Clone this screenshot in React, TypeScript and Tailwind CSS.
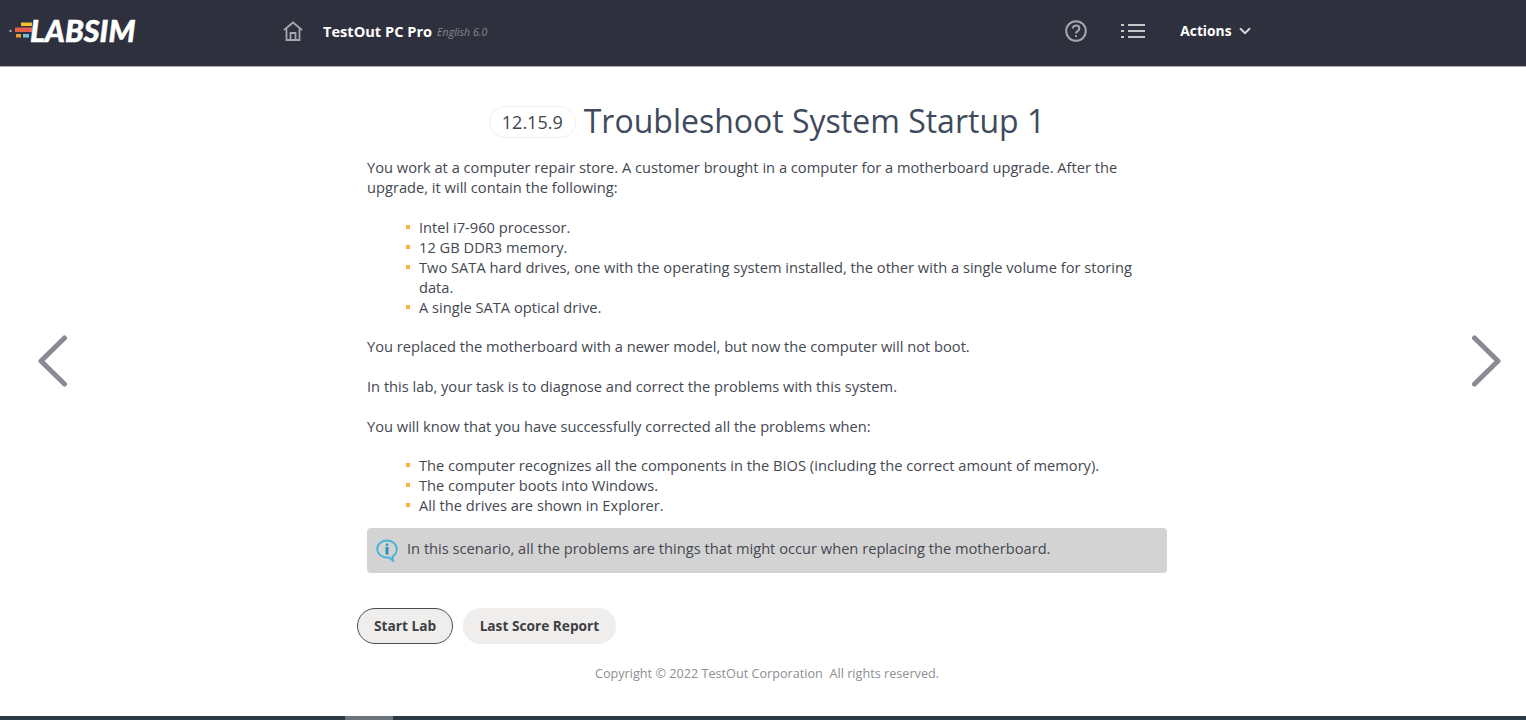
import { ChevronDown } from "lucide-react";

const specs = [
  "Intel i7-960 processor.",
  "12 GB DDR3 memory.",
  "Two SATA hard drives, one with the operating system installed, the other with a single volume for storing data.",
  "A single SATA optical drive.",
];

const goals = [
  "The computer recognizes all the components in the BIOS (including the correct amount of memory).",
  "The computer boots into Windows.",
  "All the drives are shown in Explorer.",
];

function Bullets({ items }: { items: string[] }) {
  return (
    <ul className="pl-[39px] pr-[30px]">
      {items.map((item) => (
        <li key={item} className="relative pl-[13px]">
          <span className="absolute left-0 top-[8px] h-[4px] w-[4px] bg-[#f2b544]" />
          {item}
        </li>
      ))}
    </ul>
  );
}

function Logo() {
  return (
    <div className="flex items-center">
      <svg width="24" height="20" viewBox="0 0 24 20" className="mt-[1px]">
        <circle cx="1.5" cy="10" r="1.2" fill="#9fb4bd" />
        <rect x="12" y="1.5" width="11" height="3.5" fill="#f2c230" />
        <rect x="6" y="6.5" width="17" height="4.5" fill="#e5604a" />
        <rect x="7" y="13" width="5" height="3.5" fill="#f09a2e" />
        <rect x="14" y="13" width="6" height="3.5" fill="#6fc3d6" />
      </svg>
      <span className="ml-[-3px] font-['Lato'] text-[30.5px] font-black italic leading-none text-white [-webkit-text-stroke:0.5px_white]">
        LABSIM
      </span>
    </div>
  );
}

function HomeIcon() {
  return (
    <svg width="20" height="20" viewBox="0 0 20 20" fill="none" stroke="#a4a7ae" strokeWidth="1.8">
      <path d="M1 9 10 1.5 19 9" />
      <path d="M3.5 7.5V19h13V7.5" />
      <path d="M7.5 19v-7h5v7" />
    </svg>
  );
}

function HelpIcon() {
  return (
    <svg width="22" height="22" viewBox="0 0 22 22" fill="none" stroke="#a4a7ae" strokeWidth="2">
      <circle cx="11" cy="11" r="9.8" />
      <path d="M7.8 8.6c0-4.2 6.6-4 6.6 0 0 2.6-3.4 2.4-3.4 5" />
      <path d="M11 15.2v1.8" />
    </svg>
  );
}

function ListIcon() {
  return (
    <svg width="24" height="16" viewBox="0 0 24 16" fill="none" stroke="#c4c6ca" strokeWidth="2">
      <path d="M0 2h3M7 2h17M0 8h3M7 8h17M0 14h3M7 14h17" />
    </svg>
  );
}

function Arrow({ flip }: { flip?: boolean }) {
  return (
    <svg width="30" height="52" viewBox="0 0 30 52" fill="none" stroke="#888b92" strokeWidth="5" strokeLinecap="round" strokeLinejoin="round" className={flip ? "rotate-180" : ""}>
      <path d="M26.5 3 3 26l23.5 23" />
    </svg>
  );
}

function InfoIcon() {
  return (
    <svg width="22" height="24" viewBox="0 0 22 24" fill="none">
      <path d="M11 1.5c5.5 0 9.7 3.7 9.7 8.6 0 3.4-1.6 6-4.2 7.4l.5 4.2-3.9-3.2C7 19 1.2 15.5 1.2 10.1 1.2 5.2 5.5 1.5 11 1.5Z" stroke="#41b3d8" strokeWidth="1.8" />
      <circle cx="11" cy="5.8" r="1.3" fill="#2d8fb3" />
      <rect x="9.5" y="8" width="3" height="7.5" fill="#2d8fb3" />
    </svg>
  );
}

export default function App() {
  return (
    <div className="flex h-[720px] flex-col overflow-hidden bg-white font-['Open_Sans',sans-serif] text-[14.67px] leading-[20px] text-[#444851]">
      <header className="flex h-[67px] shrink-0 items-center border-b border-[#a9abb0] bg-[#2e303d] pb-[5px] text-white">
        <div className="flex w-[283px] shrink-0 pl-[9px]">
          <Logo />
        </div>
        <HomeIcon />
        <span className="ml-[20px] text-[14.6px] font-bold">TestOut PC Pro</span>
        <span className="ml-[5px] mt-[2px] text-[10.6px] italic text-[#868892]">English 6.0</span>
        <div className="ml-[578px]">
          <HelpIcon />
        </div>
        <div className="ml-[34px]">
          <ListIcon />
        </div>
        <span className="ml-[35px] text-[13.8px] font-bold">Actions</span>
        <ChevronDown className="ml-[4px] h-[18px] w-[18px] text-[#d5d6d9]" strokeWidth={2.5} />
      </header>

      <main className="flex min-h-0 flex-1">
        <div className="flex w-[367px] shrink-0 items-center pb-[62px] pl-[38px]">
          <Arrow />
        </div>

        <div className="w-[800px] shrink-0">
          <div className="mt-[33px] flex items-center justify-center">
            <span className="mt-[2px] rounded-full border border-[#eeeeee] px-[12px] py-[3px] text-[18px] font-medium leading-[24px] text-[#3f4552]">
              12.15.9
            </span>
            <h1 className="ml-[8px] text-[32px] leading-[42px] text-[#3f4a5c]">Troubleshoot System Startup 1</h1>
          </div>

          <div className="mt-[15px]">
            <p className="pr-[30px]">
              You work at a computer repair store. A customer brought in a computer for a motherboard upgrade. After the upgrade, it will contain the following:
            </p>
            <div className="mt-[20px]">
              <Bullets items={specs} />
            </div>
            <p className="mt-[19px]">You replaced the motherboard with a newer model, but now the computer will not boot.</p>
            <p className="mt-[20px]">In this lab, your task is to diagnose and correct the problems with this system.</p>
            <p className="mt-[20px]">You will know that you have successfully corrected all the problems when:</p>
            <div className="mt-[19px]">
              <Bullets items={goals} />
            </div>
          </div>

          <div className="mt-[13px] flex h-[45px] items-center rounded-[4px] bg-[#d3d3d3] pl-[9px]">
            <InfoIcon />
            <span className="ml-[9px] mt-[-5px]">In this scenario, all the problems are things that might occur when replacing the motherboard.</span>
          </div>

          <div className="ml-[-10px] mt-[35px] flex gap-[10px]">
            <button className="h-[36px] rounded-full border border-[#4a4d55] bg-[#efeeec] px-[16px] text-[13.7px] font-bold text-[#3f3f42]">
              Start Lab
            </button>
            <button className="h-[36px] rounded-full bg-[#efeeec] px-[16.5px] text-[13.7px] font-bold text-[#3f3f42]">
              Last Score Report
            </button>
          </div>

          <p className="mt-[19px] text-center text-[12.67px] text-[#8d8f94]">Copyright © 2022 TestOut Corporation&nbsp; All rights reserved.</p>
        </div>

        <div className="flex flex-1 items-center justify-end pb-[62px] pr-[25px]">
          <Arrow flip />
        </div>
      </main>

      <footer className="flex h-[4px] shrink-0 bg-[#2b3a45]">
        <div className="ml-[345px] h-full w-[48px] bg-[#6d757c]" />
      </footer>
    </div>
  );
}
